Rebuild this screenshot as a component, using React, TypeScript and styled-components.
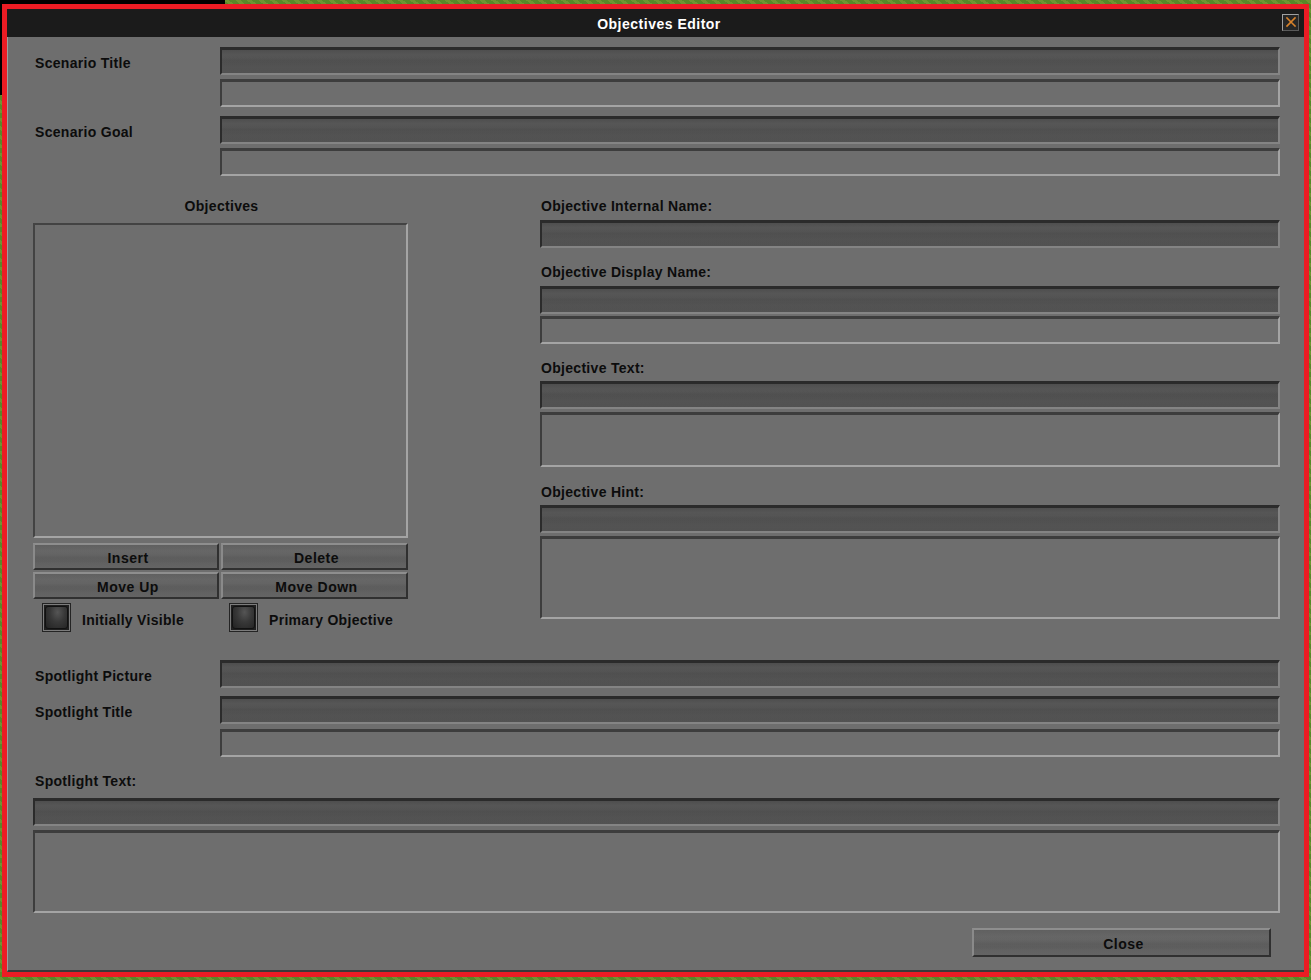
import React from 'react';
import styled, { createGlobalStyle } from 'styled-components';

const GlobalStyle = createGlobalStyle`
  html, body {
    margin: 0;
    padding: 0;
  }

  body {
    width: 1311px;
    height: 980px;
    overflow: hidden;
    background-color: #5f8f2c;
    background-image:
      linear-gradient(#000, #000),
      linear-gradient(#000, #000),
      repeating-linear-gradient(37deg, rgba(140, 160, 60, 0.35) 0 3px, rgba(70, 120, 30, 0.3) 3px 7px);
    background-size: 225px 4px, 2px 95px, auto;
    background-position: 0 0, 0 0, 0 0;
    background-repeat: no-repeat, no-repeat, repeat;
    font-family: 'Liberation Sans', Arial, sans-serif;
  }
`;

const darkTexture = `
  linear-gradient(180deg, rgba(0, 0, 0, 0) 0%, rgba(255, 255, 255, 0.025) 20%, rgba(0, 0, 0, 0.03) 45%, rgba(255, 255, 255, 0.02) 70%, rgba(0, 0, 0, 0) 100%),
  linear-gradient(180deg, #4f4f4f 0%, #545454 35%, #4f4f4f 65%, #525252 100%)
`;

const buttonTexture = `
  linear-gradient(180deg, rgba(0, 0, 0, 0) 0%, rgba(255, 255, 255, 0.025) 25%, rgba(0, 0, 0, 0.03) 55%, rgba(255, 255, 255, 0.02) 80%),
  linear-gradient(180deg, #606060 0%, #646464 40%, #5d5d5d 70%, #616161 100%)
`;

type FieldSpec = { $tall?: number };

const Objectives: React.FC = () => (
  <Window>
    <TitleBar>
      <span />
      <Title>Objectives Editor</Title>
      <CloseX aria-label="close">
        <svg width="12" height="12" viewBox="0 0 12 12">
          <path d="M2 2 L10 10 M10 2 L2 10" stroke="#d9822a" strokeWidth="1.6" strokeLinecap="square" />
        </svg>
      </CloseX>
    </TitleBar>

    <Panel>
      <LabeledGroup>
        <RowLabel>Scenario Title</RowLabel>
        <FieldStack $gap={4}>
          <DarkField />
          <LightField />
        </FieldStack>
      </LabeledGroup>

      <LabeledGroup $top={9}>
        <RowLabel>Scenario Goal</RowLabel>
        <FieldStack $gap={4}>
          <DarkField />
          <LightField />
        </FieldStack>
      </LabeledGroup>

      <Middle>
        <LeftColumn>
          <ListHeader>Objectives</ListHeader>
          <ListBox />
          <ButtonGrid>
            <Button>Insert</Button>
            <Button>Delete</Button>
            <Button>Move Up</Button>
            <Button>Move Down</Button>
          </ButtonGrid>
          <CheckGrid>
            <CheckItem $indent={9}>
              <CheckBox>
                <Knob />
              </CheckBox>
              <CheckLabel>Initially Visible</CheckLabel>
            </CheckItem>
            <CheckItem $indent={8}>
              <CheckBox>
                <Knob />
              </CheckBox>
              <CheckLabel>Primary Objective</CheckLabel>
            </CheckItem>
          </CheckGrid>
        </LeftColumn>

        <RightColumn>
          <SectionLabel>Objective Internal Name:</SectionLabel>
          <FieldStack $gap={2} $top={5}>
            <DarkField />
          </FieldStack>

          <SectionLabel $top={15}>Objective Display Name:</SectionLabel>
          <FieldStack $gap={2} $top={5}>
            <DarkField />
            <LightField />
          </FieldStack>

          <SectionLabel $top={15}>Objective Text:</SectionLabel>
          <FieldStack $gap={3} $top={4}>
            <DarkField />
            <LightField $tall={55} />
          </FieldStack>

          <SectionLabel $top={16}>Objective Hint:</SectionLabel>
          <FieldStack $gap={3} $top={4}>
            <DarkField />
            <LightField $tall={83} />
          </FieldStack>
        </RightColumn>
      </Middle>

      <LabeledGroup $top={28}>
        <RowLabel>Spotlight Picture</RowLabel>
        <FieldStack $gap={4}>
          <DarkField />
        </FieldStack>
      </LabeledGroup>

      <LabeledGroup $top={8}>
        <RowLabel>Spotlight Title</RowLabel>
        <FieldStack $gap={5}>
          <DarkField />
          <LightField />
        </FieldStack>
      </LabeledGroup>

      <SectionLabel $top={15} $indent={2}>
        Spotlight Text:
      </SectionLabel>
      <FieldStack $gap={4} $top={8}>
        <DarkField />
        <LightField $tall={83} />
      </FieldStack>

      <Footer>
        <CloseButton>Close</CloseButton>
      </Footer>
    </Panel>
  </Window>
);

const Window = styled.div`
  box-sizing: border-box;
  width: 1307px;
  height: 973px;
  margin: 4px 0 0 2px;
  border: 5px solid #ec1c24;
  display: flex;
  flex-direction: column;
  background: #6e6e6e;
`;

const TitleBar = styled.div`
  height: 28px;
  flex: none;
  display: grid;
  grid-template-columns: 1fr auto 1fr;
  align-items: center;
  background: #1b1b1b;
`;

const Title = styled.div`
  color: #ffffff;
  font-size: 14px;
  font-weight: bold;
  letter-spacing: 0.5px;
  padding-top: 1px;
  margin-left: 7px;
`;

const CloseX = styled.div`
  justify-self: end;
  margin-right: 5px;
  margin-top: -2px;
  box-sizing: border-box;
  width: 17px;
  height: 17px;
  display: flex;
  align-items: center;
  justify-content: center;
  background: #262626;
  border: 1px solid;
  border-color: #a0a0a0 #5a5a5a #5a5a5a #a0a0a0;
`;

const Panel = styled.div`
  flex: 1;
  display: flex;
  flex-direction: column;
  padding: 10px 24px 0 25px;
  border-left: 1px solid #9c9c9c;
  border-bottom: 2px solid #3a3a3a;
  background: #6e6e6e;
`;

const LabeledGroup = styled.div<{ $top?: number }>`
  display: grid;
  grid-template-columns: 187px 1fr;
  margin-top: ${({ $top }) => $top ?? 0}px;
`;

const labelText = `
  color: #0c0c0c;
  font-size: 14px;
  font-weight: bold;
  letter-spacing: 0.3px;
  white-space: nowrap;
`;

const RowLabel = styled.div`
  ${labelText}
  line-height: 24px;
  padding: 4px 0 0 2px;
`;

const SectionLabel = styled.div<{ $top?: number; $indent?: number }>`
  ${labelText}
  line-height: 18px;
  margin-top: ${({ $top }) => $top ?? 0}px;
  padding-left: ${({ $indent }) => $indent ?? 1}px;
`;

const FieldStack = styled.div<{ $gap: number; $top?: number }>`
  display: flex;
  flex-direction: column;
  gap: ${({ $gap }) => $gap}px;
  margin-top: ${({ $top }) => $top ?? 0}px;
`;

const DarkField = styled.div`
  box-sizing: border-box;
  height: 28px;
  border-style: solid;
  border-width: 3px 2px 2px 2px;
  border-color: #2b2b2b #848484 #848484 #2b2b2b;
  background: ${darkTexture};
`;

const LightField = styled.div<FieldSpec>`
  box-sizing: border-box;
  height: ${({ $tall }) => $tall ?? 28}px;
  border-style: solid;
  border-width: 3px 2px 2px 2px;
  border-color: #3d3d3d #a4a4a4 #a4a4a4 #3d3d3d;
  background: #6e6e6e;
`;

const Middle = styled.div`
  display: grid;
  grid-template-columns: 375px 1fr;
  column-gap: 132px;
  margin-top: 21px;
`;

const LeftColumn = styled.div`
  display: flex;
  flex-direction: column;
`;

const RightColumn = styled.div`
  display: flex;
  flex-direction: column;
`;

const ListHeader = styled.div`
  ${labelText}
  line-height: 18px;
  text-align: center;
  padding-left: 2px;
`;

const ListBox = styled.div`
  box-sizing: border-box;
  height: 315px;
  margin-top: 8px;
  border-style: solid;
  border-width: 2px;
  border-color: #434343 #a4a4a4 #a4a4a4 #434343;
  background: #6e6e6e;
`;

const ButtonGrid = styled.div`
  display: grid;
  grid-template-columns: 186px 187px;
  grid-auto-rows: 27px;
  gap: 2px;
  margin-top: 5px;
`;

const Button = styled.div`
  box-sizing: border-box;
  display: flex;
  align-items: center;
  justify-content: center;
  border-style: solid;
  border-width: 2px;
  border-color: #8e8e8e #303030 #303030 #8a8a8a;
  background: ${buttonTexture};
  ${labelText}
  letter-spacing: 0.5px;
  padding: 2px 0 0 4px;
`;

const CheckGrid = styled.div`
  display: grid;
  grid-template-columns: 186px 187px;
  column-gap: 2px;
  margin-top: 4px;
`;

const CheckItem = styled.div<{ $indent: number }>`
  display: flex;
  align-items: center;
  gap: 11px;
  padding-left: ${({ $indent }) => $indent}px;
`;

const CheckBox = styled.div`
  box-sizing: border-box;
  width: 29px;
  height: 29px;
  padding: 2px;
  background: #1f1f1f;
  border: 1px solid #242424;
  box-shadow: inset 0 0 0 1px #7c7c7c;
`;

const Knob = styled.div`
  width: 100%;
  height: 100%;
  box-sizing: border-box;
  border: 1px solid #111;
  border-radius: 3px;
  background: radial-gradient(ellipse at 55% 25%, #555555 0%, #383838 45%, #222222 100%);
`;

const CheckLabel = styled.span`
  ${labelText}
  padding-top: 5px;
`;

const Footer = styled.div`
  display: flex;
  justify-content: flex-end;
  padding-right: 9px;
  margin-top: 15px;
`;

const CloseButton = styled(Button)`
  width: 299px;
  height: 29px;
`;

const App: React.FC = () => (
  <>
    <GlobalStyle />
    <Objectives />
  </>
);

export default App;
